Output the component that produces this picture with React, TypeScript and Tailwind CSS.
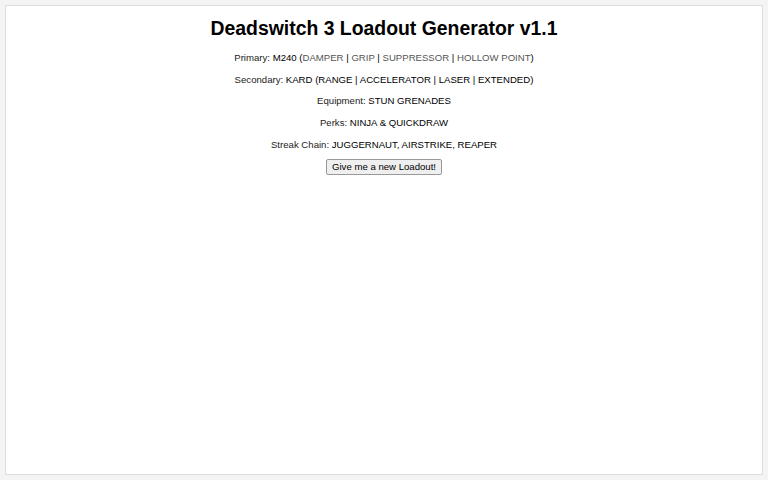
export default function App() {
  const lines = [
    { label: "Primary:", parts: [{ t: "M240 (", c: "text-black" }, { t: "DAMPER", c: "text-[#555]" }, { t: " | ", c: "text-black" }, { t: "GRIP", c: "text-[#555]" }, { t: " | ", c: "text-black" }, { t: "SUPPRESSOR", c: "text-[#555]" }, { t: " | ", c: "text-black" }, { t: "HOLLOW POINT", c: "text-[#555]" }, { t: ")", c: "text-black" }] },
    { label: "Secondary:", parts: [{ t: "KARD (RANGE | ACCELERATOR | LASER | EXTENDED)", c: "text-black" }] },
    { label: "Equipment:", parts: [{ t: "STUN GRENADES", c: "text-black" }] },
    { label: "Perks:", parts: [{ t: "NINJA & QUICKDRAW", c: "text-black" }] },
    { label: "Streak Chain:", parts: [{ t: "JUGGERNAUT, AIRSTRIKE, REAPER", c: "text-black" }] },
  ];
  return (
    <div className="min-h-[480px] bg-[#f4f4f4] p-[5px] font-['Liberation_Sans',Arial,sans-serif]">
      <div className="h-[470px] border border-[#dedede] bg-white text-center">
        <h1 className="pt-[10px] text-[19.4px] font-bold leading-[24px] text-black">Deadswitch 3 Loadout Generator v1.1</h1>
        <div className="mt-[11px] flex flex-col gap-[8.7px]">
          {lines.map((l) => (
            <p key={l.label} className="text-[9.6px] leading-[13px] text-[#222]">
              {l.label}{" "}
              {l.parts.map((p, i) => (
                <span key={i} className={p.c}>{p.t}</span>
              ))}
            </p>
          ))}
        </div>
        <button className="mt-[8px] h-[16px] rounded-[2px] border border-[#999] bg-[#efefef] px-[5px] text-[9.6px] leading-[13px] text-black">
          Give me a new Loadout!
        </button>
      </div>
    </div>
  );
}
